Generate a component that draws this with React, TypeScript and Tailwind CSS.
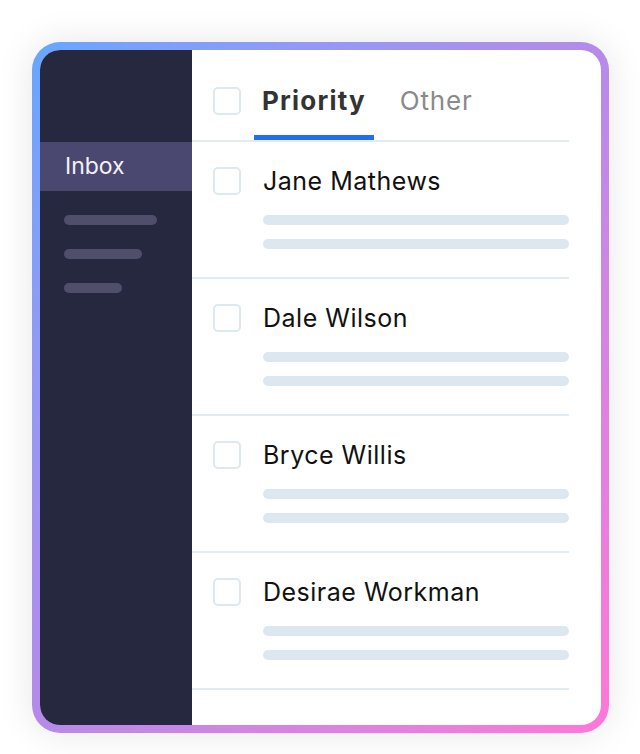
const contacts = ['Jane Mathews', 'Dale Wilson', 'Bryce Willis', 'Desirae Workman']

function Checkbox() {
  return <div className="h-[28px] w-[28px] shrink-0 rounded-[5px] border-2 border-[#dde8ef] bg-white" />
}

function Row({ name }: { name: string }) {
  return (
    <div className="flex h-[137px] border-b-2 border-[#e2ebf1] pl-[21px] pt-[25px]">
      <Checkbox />
      <div className="ml-[22px] flex flex-1 flex-col">
        <div className="text-[25px] leading-[28px] tracking-[0.5px] text-[#111111]">{name}</div>
        <div className="mt-[20px] h-[10px] rounded-full bg-[#dde7ef]" />
        <div className="mt-[14px] h-[10px] rounded-full bg-[#dde7ef]" />
      </div>
    </div>
  )
}

export default function App() {
  return (
    <div className="min-h-screen bg-white pl-[32px] pt-[42px]" style={{ fontFamily: 'Inter, "Noto Sans", sans-serif' }}>
      <div className="h-[691px] w-[577px] rounded-[28px] bg-gradient-to-br from-[#66a6ff] via-[#b68ae9] to-[#ff76d9] p-[8px] shadow-[0_0_36px_rgba(0,0,0,0.10)]">
        <div className="flex h-full overflow-hidden rounded-[20px] bg-white">
          <aside className="w-[152px] shrink-0 bg-[#262840] pt-[92px]">
            <div className="flex h-[49px] items-center bg-[#4a4870] pl-[25px] text-[23px] text-[#f2f1f8]">Inbox</div>
            <div className="flex flex-col gap-[24px] pl-[24px] pt-[24px]">
              <div className="h-[10px] w-[93px] rounded-full bg-[#4f4e6b]" />
              <div className="h-[10px] w-[78px] rounded-full bg-[#4f4e6b]" />
              <div className="h-[10px] w-[58px] rounded-full bg-[#4f4e6b]" />
            </div>
          </aside>
          <main className="flex flex-1 flex-col pr-[32px]">
            <div className="flex h-[92px] items-end border-b-2 border-[#e2ebf1] pl-[21px]">
              <div className="mb-[25px]">
                <Checkbox />
              </div>
              <div className="ml-[13px] border-b-[5px] border-[#1f6fef] px-[8px] pb-[19px] text-[26px] font-bold leading-[30px] tracking-[1.2px] text-[#333333]">
                Priority
              </div>
              <div className="ml-[18px] border-b-[5px] border-transparent px-[8px] pb-[19px] text-[26px] leading-[30px] tracking-[0.8px] text-[#8a8a8a]">
                Other
              </div>
            </div>
            {contacts.map((c) => (
              <Row key={c} name={c} />
            ))}
          </main>
        </div>
      </div>
    </div>
  )
}
